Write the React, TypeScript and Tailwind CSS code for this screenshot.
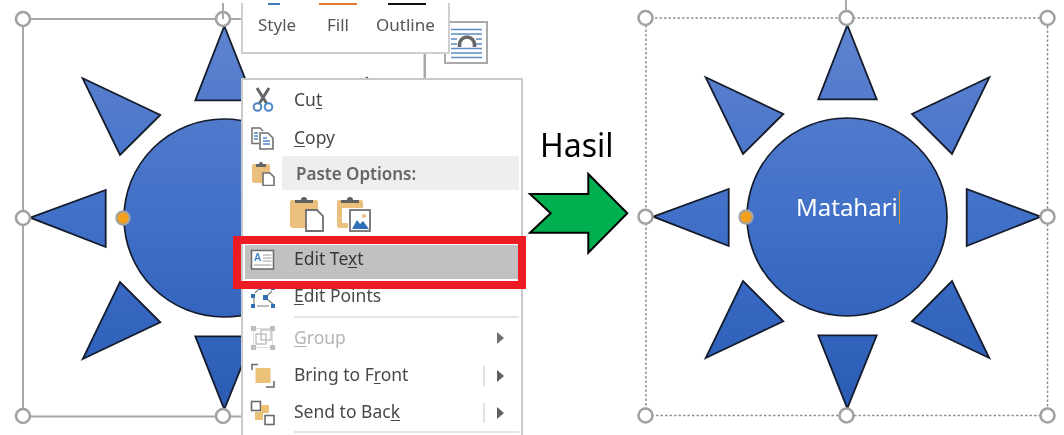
import React from "react";

const tris = [
  "224.3,26 195.3,100.3 253.7,100.3",
  "30.3,217.7 105.7,190 105.7,247",
  "417.7,217.7 343.7,190 343.7,247",
  "224.3,409.3 195.3,336.3 253.7,336.3",
  "82.7,78.3 160.3,115 120,155",
  "366.3,78.3 289,115 329,155",
  "82.7,359 160.3,322.3 120,282",
  "366.3,359 289,322.3 329,282",
];

function Sun({ id, dashed, handles }: { id: string; dashed: boolean; handles: [number, number][] }) {
  return (
    <svg width="450" height="436" viewBox="0 0 450 436" className="block">
      <defs>
        <linearGradient id={id} gradientUnits="userSpaceOnUse" x1="0" y1="26" x2="0" y2="410">
          <stop offset="0" stopColor="#5f83cf" />
          <stop offset="0.5" stopColor="#4070c8" />
          <stop offset="1" stopColor="#2a5cb6" />
        </linearGradient>
      </defs>
      <rect x="23" y="19" width="401.5" height="397.5" fill="none" stroke={dashed ? "#8f8f8f" : "#a8a8a8"} strokeWidth={dashed ? 1.5 : 2} strokeDasharray={dashed ? "2.5 2" : undefined} />
      {tris.map((p) => (
        <polygon key={p} points={p} fill={`url(#${id})`} stroke="#141c2c" strokeWidth="1.8" strokeLinejoin="miter" />
      ))}
      <ellipse cx="224" cy="218" rx="100" ry="99" fill={`url(#${id})`} stroke="#141c2c" strokeWidth="1.7" />
      {handles.map(([x, y]) => (
        <circle key={`${x}-${y}`} cx={x} cy={y} r="7" fill="#fff" stroke="#a2a2a2" strokeWidth="2.6" />
      ))}
      <circle cx="123" cy="218" r="6.6" fill="#f5a01c" stroke="#a2a2a2" strokeWidth="2.2" />
    </svg>
  );
}

const Scissors = () => (
  <svg width="26" height="26" viewBox="0 0 26 26">
    <path d="M7 1 L17 17 M19 1 L9 17" stroke="#666" strokeWidth="3" fill="none" />
    <circle cx="7.5" cy="20" r="3.8" fill="none" stroke="#4f86c6" strokeWidth="2" />
    <circle cx="18.5" cy="20" r="3.8" fill="none" stroke="#4f86c6" strokeWidth="2" />
  </svg>
);
const CopyIcon = () => (
  <svg width="26" height="26" viewBox="0 0 26 26">
    <path d="M9 18.5 H2 V3 H10 L13 6" fill="none" stroke="#707070" strokeWidth="1.5" />
    <path d="M4 8 H8 M4 11 H8 M4 14 H8" stroke="#4f86c6" strokeWidth="1.4" />
    <path d="M10 8 H18 L23 13 V24 H10 Z" fill="#fff" stroke="#707070" strokeWidth="1.6" />
    <path d="M13 13 H17 M13 16 H20 M13 19 H20" stroke="#4f86c6" strokeWidth="1.5" />
  </svg>
);
const PasteSmall = () => (
  <svg width="26" height="26" viewBox="0 0 26 26">
    <path d="M2 6 a2 2 0 0 1 2 -2 H18 a2 2 0 0 1 2 2 V23 H4 a2 2 0 0 1 -2 -2 Z" fill="#ebbf7c" />
    <path d="M6 7 V4 H9 a2 2 0 0 1 4 0 H16 V7 Z" fill="#666" />
    <path d="M13 13 H20 L24 17 V25.5 H13 Z" fill="#fff" stroke="#707070" strokeWidth="1.6" />
  </svg>
);
const PasteDoc = () => (
  <svg width="34" height="37" viewBox="0 0 34 37" className="block">
    <path d="M0 7 a2 2 0 0 1 2 -2 H26 a2 2 0 0 1 2 2 V33 H3 a3 3 0 0 1 -3 -3 Z" fill="#ebbf7c" />
    <path d="M5 8 V5 H11 a3 3 0 0 1 6 0 H23 V8 Z" fill="#5f5f5f" />
    <path d="M16 15 H27 L33 21 V36 H16 Z" fill="#fff" stroke="#707070" strokeWidth="1.8" />
  </svg>
);
const PastePic = () => (
  <svg width="35" height="37" viewBox="0 0 35 37" className="block">
    <path d="M1 7 a2 2 0 0 1 2 -2 H25 a2 2 0 0 1 2 2 V13 H6 V28 H12 V33 H4 a3 3 0 0 1 -3 -3 Z" fill="#ebbf7c" />
    <path d="M5 8 V5 H11 a3 3 0 0 1 6 0 H23 V8 Z" fill="#5f5f5f" />
    <rect x="14" y="15" width="20" height="21" fill="#fff" stroke="#707070" strokeWidth="1.8" />
    <circle cx="28" cy="21" r="2" fill="#ebbf7c" />
    <path d="M16 34 L21 25 L24 29 L27 26 L33 34 Z" fill="#2f6fb5" />
  </svg>
);
const EditTextIcon = () => (
  <svg width="26" height="26" viewBox="0 0 26 26">
    <rect x="1.5" y="1.5" width="22" height="18.5" fill="#fff" stroke="#6f6f6f" strokeWidth="1.6" />
    <text x="4" y="12" fontFamily="'Liberation Sans',sans-serif" fontSize="10" fontWeight="700" fill="#3f7fc4">A</text>
    <path d="M13 6 H21.5 M13 9 H21.5 M13 12 H21.5 M4 16 H21.5" stroke="#9a9a9a" strokeWidth="1" />
  </svg>
);
const EditPoints = () => (
  <svg width="26" height="26" viewBox="0 0 26 26">
    <path d="M4 19 V11 M7 21 H19 M8 5 L5 8 M16 12 L22 6 M17 14 L23 19" stroke="#7a7a7a" strokeWidth="1.1" fill="none" />
    <g fill="#2f6fb5">
      <rect x="1" y="19" width="4" height="4" /><rect x="21" y="19" width="4" height="4" />
      <rect x="1" y="9" width="4" height="4" /><rect x="13" y="10" width="5" height="5" />
      <rect x="8" y="2" width="4" height="3" /><rect x="21" y="2" width="4" height="3" />
    </g>
  </svg>
);
const GroupIcon = () => (
  <svg width="26" height="26" viewBox="0 0 26 26">
    <g fill="#bdbdbd">
      <rect x="1" y="1" width="5" height="5" /><rect x="20" y="1" width="5" height="5" />
      <rect x="1" y="20" width="5" height="5" /><rect x="20" y="20" width="5" height="5" />
    </g>
    <rect x="6" y="9" width="10" height="10" fill="none" stroke="#c3bdc3" strokeWidth="1.4" />
    <rect x="11" y="5" width="10" height="10" fill="none" stroke="#c3bdc3" strokeWidth="1.4" />
    <path d="M6 3.5 H20 M6 22.5 H20 M3.5 6 V20 M22.5 6 V20" stroke="#ddd" strokeWidth="1" />
  </svg>
);
const BringIcon = () => (
  <svg width="26" height="26" viewBox="0 0 26 26">
    <path d="M2 7 V1.5 H8 M24 18 V24 H16" fill="none" stroke="#6a6a6a" strokeWidth="1.6" />
    <rect x="5.5" y="5" width="15" height="15" fill="#ebc077" />
  </svg>
);
const SendIcon = () => (
  <svg width="26" height="26" viewBox="0 0 26 26">
    <rect x="1.5" y="1.5" width="9" height="9" fill="#fff" stroke="#6a6a6a" strokeWidth="1.6" />
    <rect x="11" y="5" width="8" height="8" fill="#ebc077" />
    <rect x="5" y="12" width="8" height="8" fill="#ebc077" />
    <rect x="15" y="15.5" width="9" height="9" fill="#fff" stroke="#6a6a6a" strokeWidth="1.6" />
  </svg>
);

function Row({ icon, h, children, sub, split, muted, nudge }: { icon: React.ReactNode; h: string; children: React.ReactNode; sub?: boolean; split?: boolean; muted?: boolean; nudge?: string }) {
  return (
    <div className={`${h} flex items-center pl-[7px] pr-[17px] ${muted ? "text-[#b4b4b4]" : "text-[#484848]"}`}>
      <span className="w-[26px] h-[26px] mr-[18px] shrink-0">{icon}</span>
      <span className={`grow ${nudge ?? ""}`}>{children}</span>
      {split && <span className="w-[2px] h-[20px] bg-[#e2e2e2] mr-[12px]" />}
      {sub && <span className={`w-0 h-0 border-y-[6px] border-y-transparent border-l-[7px] ${muted ? "border-l-[#707070]" : "border-l-[#606060]"}`} />}
    </div>
  );
}

export default function App() {
  return (
    <div className="relative w-[1064px] h-[435px] overflow-hidden bg-white blur-[0.35px] font-['Noto_Sans',sans-serif]">
      {/* left shape */}
      <div className="absolute left-0 top-0">
        <Sun id="sunA" dashed={false} handles={[[23, 19], [223, 19], [23, 218], [23, 416], [223, 416]]} />
      </div>
      <div className="absolute left-[222px] top-[3px] w-[2px] h-[16px] bg-[#a8a8a8]" />

      {/* right shape */}
      <div className="absolute left-[623px] top-[-1px]">
        <Sun id="sunB" dashed={true} handles={[[22.5, 19], [223.5, 19], [424.5, 19], [22.5, 217.7], [424.5, 217.7], [22.5, 416.5], [223.5, 416.5], [424.5, 416.5]]} />
      </div>
      <div className="absolute left-[845px] top-0 w-[2px] h-[10px] bg-[#a8a8a8]" />
      <div className="absolute left-[796px] top-[190px] flex items-center h-[34px] text-white text-[24px] leading-none">
        <span>Matahari</span>
        <span className="w-[1.5px] h-[34px] bg-[#c8922a] ml-[1px]" />
      </div>

      {/* wrap-text icon */}
      <svg width="44" height="44" viewBox="0 0 44 44" className="absolute left-[444px] top-[20px]">
        <rect x="1" y="2" width="42" height="41" fill="#fff" stroke="#a9a9a9" strokeWidth="2" />
        <path d="M7 9.5 H38 M7 14 H38 M7 19 H13 M32 19 H38 M7 24 H13 M32 24 H38 M7 28.5 H38 M7 33 H38 M7 37.5 H38" stroke="#5b8cc4" strokeWidth="1.6" />
        <path d="M15.5 27 V24.5 a7.5 7.5 0 0 1 15 0 V27" fill="none" stroke="#666" strokeWidth="3.6" />
      </svg>
      <div className="absolute left-[424px] top-[53px] w-[2px] h-[26px] bg-[#a8a8a8]" />

      {/* mini toolbar */}
      <div className="absolute left-[241px] top-[3px] w-[209px] h-[51px] bg-white border-x-2 border-b-2 border-[#cfcfcf] text-[#555555] text-[17px]">
        <div className="absolute left-[25px] top-0 w-[12px] h-[2px] bg-[#3f78bd]" />
        <div className="absolute left-[76px] top-0 w-[38px] h-[2px] bg-[#e57a32]" />
        <div className="absolute left-[145px] top-0 w-[38px] h-[2px] bg-[#111]" />
        <div className="flex h-full pt-[11px] leading-[22px]">
          <span className="w-[70px] pl-[15px]">Style</span>
          <span className="w-[59px] pl-[14px]">Fill</span>
          <span className="pl-[4px]">Outline</span>
        </div>
      </div>

      {/* context menu */}
      <div className="absolute left-[241px] top-[78px] w-[282px] h-[360px] bg-white border-2 border-[#c9c9c9] flex flex-col text-[17.5px] leading-none">
        <Row h="h-[39px]" icon={<Scissors />}>Cu<span className="underline underline-offset-2">t</span></Row>
        <Row h="h-[37px]" icon={<CopyIcon />}><span className="underline underline-offset-2">C</span>opy</Row>
        <div className="h-[34px] flex items-center pl-[7px] pr-[2px]">
          <span className="w-[26px] h-[26px] mr-[6px] shrink-0"><PasteSmall /></span>
          <span className="grow h-full flex items-center pl-[14px] bg-[#eeeeee] font-semibold text-[#666666] text-[17px]">Paste Options:</span>
        </div>
        <div className="h-[54px] flex items-start pt-[5px] pl-[47px] gap-[12px]">
          <PasteDoc />
          <PastePic />
        </div>
        <div className="relative h-[36px] flex items-center pl-[1px]">
          <div className="absolute -left-[10px] -top-[8px] w-[293px] h-[53px] border-[8px] border-[#ed1c24]" />
          <div className="ml-[1px] w-[273px] h-[34px] bg-[#c1c1c1] flex items-center pl-[5px] text-[#383838]">
            <span className="w-[26px] h-[26px] mr-[18px] shrink-0"><EditTextIcon /></span>
            <span className="pb-[6px]">Edit Te<span className="underline underline-offset-2">x</span>t</span>
          </div>
        </div>
        <Row h="h-[36px]" icon={<EditPoints />} nudge="pb-[4px]"><span className="underline underline-offset-2">E</span>dit Points</Row>
        <div className="h-[2px] ml-[51px] mr-[2px] bg-[#e0e6ec]" />
        <Row h="h-[39px]" icon={<GroupIcon />} sub muted><span className="underline underline-offset-2">G</span>roup</Row>
        <Row h="h-[37px]" icon={<BringIcon />} sub split nudge="pb-[2px]">Bring to F<span className="underline underline-offset-2">r</span>ont</Row>
        <Row h="h-[37px]" icon={<SendIcon />} sub split nudge="pb-[2px]">Send to Bac<span className="underline underline-offset-2">k</span></Row>
        <div className="h-[2px] ml-[51px] mr-[2px] bg-[#e0e6ec]" />
      </div>

      {/* Hasil + arrow */}
      <div className="absolute left-[540px] top-[124px] text-[32px] leading-[42px] text-black">Hasil</div>
      <svg width="104" height="84" viewBox="0 0 104 84" className="absolute left-[527px] top-[171px]">
        <polygon points="3,23 61.3,23 61.3,3 100.3,42.3 61.3,81.7 61.3,61.7 3,61.7 23.7,42.3" fill="#00b050" stroke="#000" strokeWidth="2" />
      </svg>
    </div>
  );
}
